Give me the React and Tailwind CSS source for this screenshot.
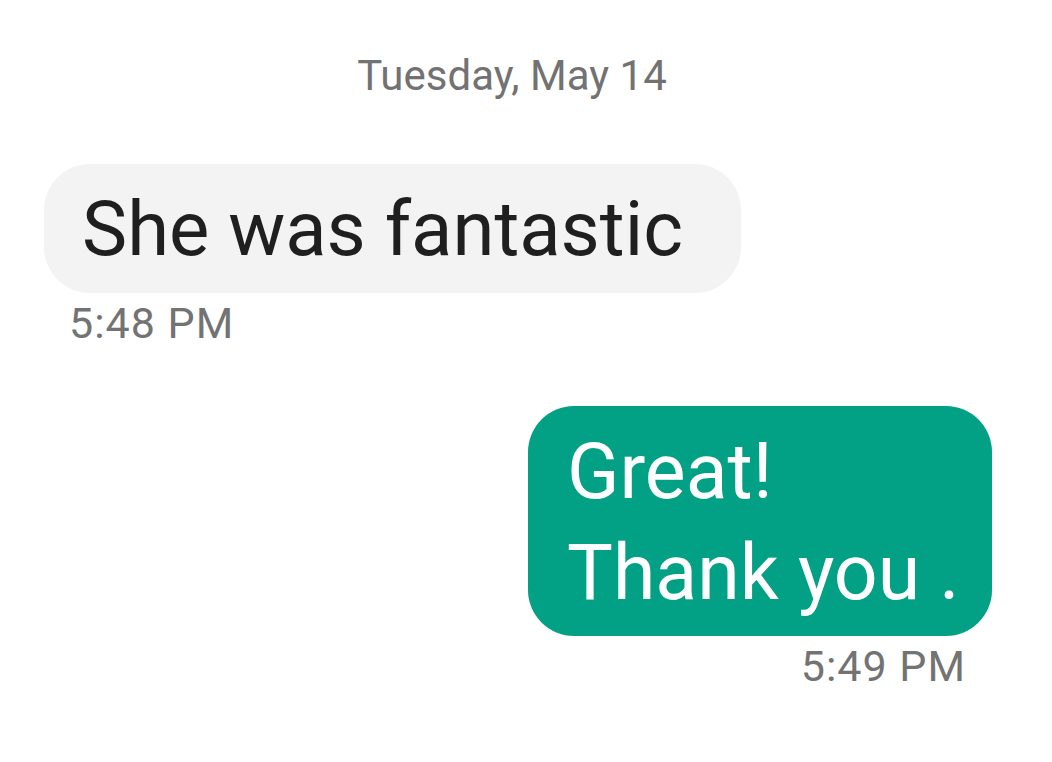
export default function App() {
  const font = { fontFamily: 'Roboto, "Noto Sans", sans-serif' };
  return (
    <div className="w-[1052px] h-[762px] bg-white flex flex-col" style={font}>
      <div className="h-[52px]" />
      <div className="h-[48px] leading-[48px] text-center text-[42px] text-[#727272] pr-[28px]">
        Tuesday, May 14
      </div>
      <div className="h-[64px]" />
      <div className="flex pl-[44px]">
        <div className="h-[129px] bg-[#f3f3f3] rounded-[46px] pl-[38px] pr-[58px] flex items-center text-[76px] text-[#1f1f1f] leading-none">
          She was fantastic
        </div>
      </div>
      <div className="h-[60px] pl-[69px] pt-[6px] text-[43px] tracking-[1px] leading-[48px] text-[#737373]">5:48 PM</div>
      <div className="h-[53px]" />
      <div className="flex justify-end pr-[60px]">
        <div className="w-[464px] h-[230px] bg-[#02a085] rounded-[46px] pl-[39px] pt-[16px] text-[77px] leading-[101px] text-white">
          <div>Great!</div>
          <div>Thank you .</div>
        </div>
      </div>
      <div className="pr-[86px] pt-[6px] text-right text-[43px] tracking-[1px] leading-[48px] text-[#737373]">5:49 PM</div>
    </div>
  );
}
